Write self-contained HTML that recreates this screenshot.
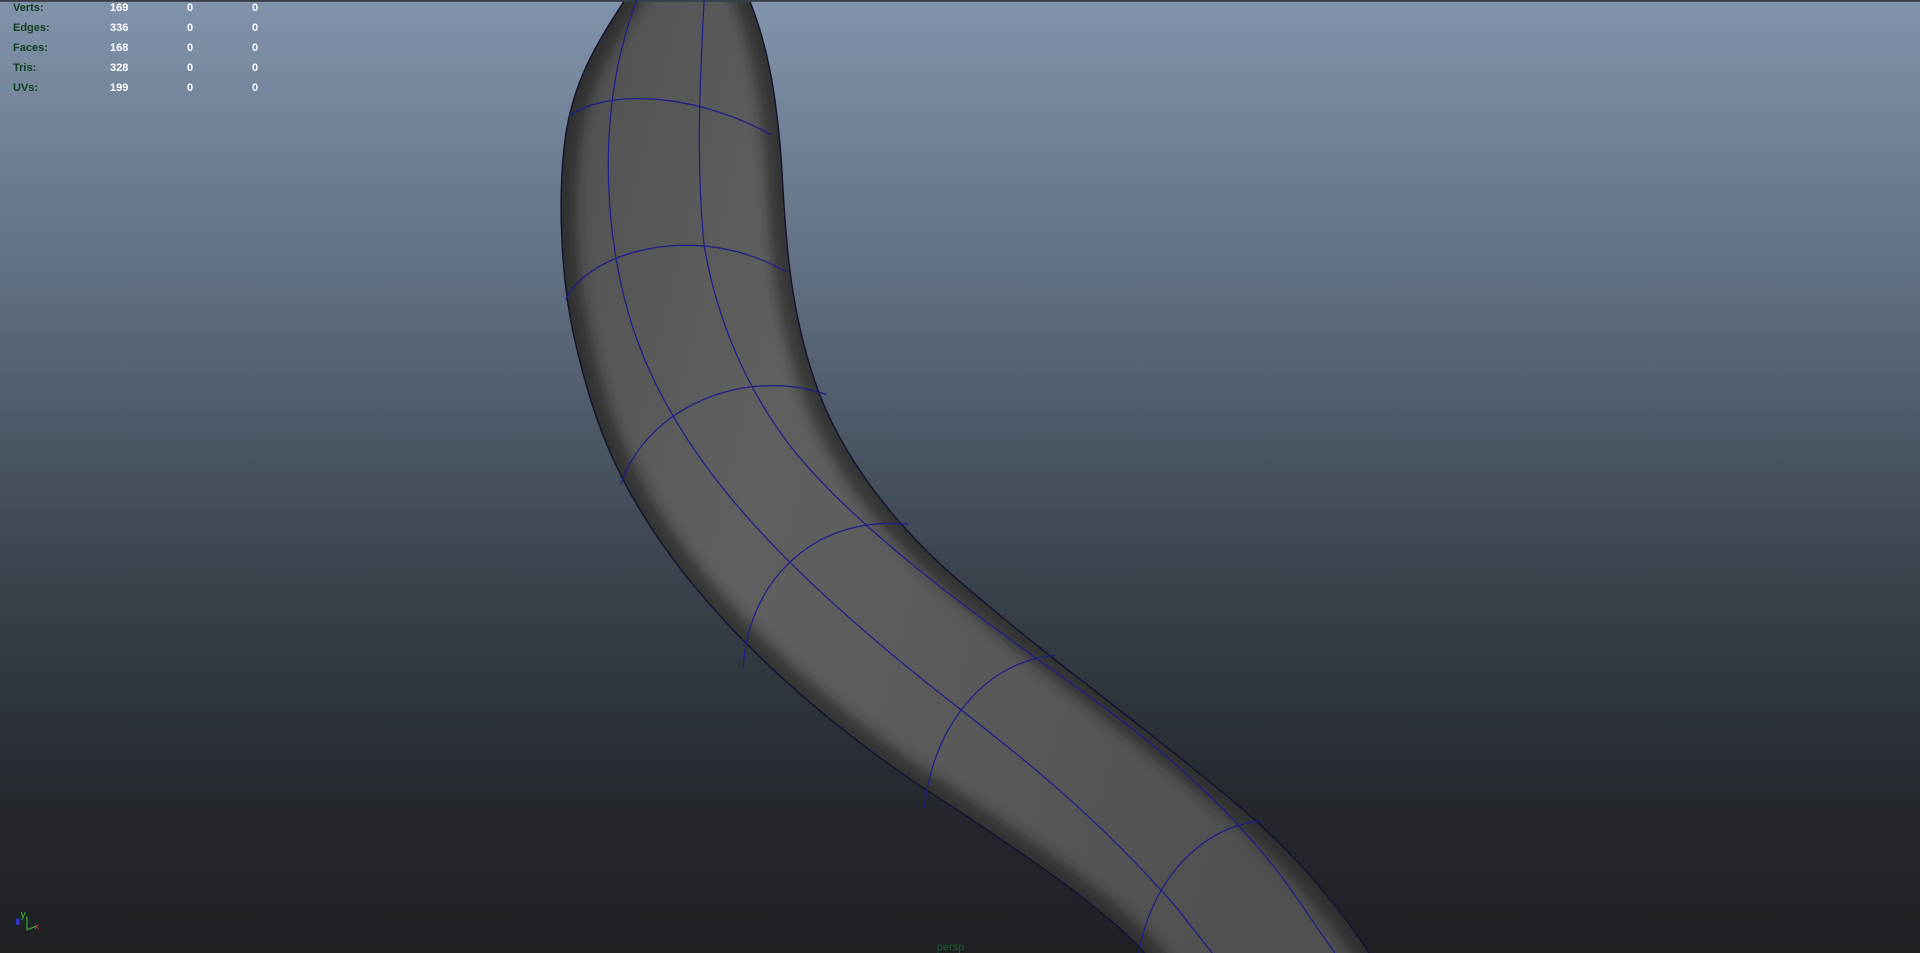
<!DOCTYPE html>
<html><head><meta charset="utf-8"><style>
html,body{margin:0;padding:0;width:1920px;height:953px;overflow:hidden;background:#1f2226}
svg{position:absolute;left:0;top:0}
.st{position:absolute;font-family:"Liberation Sans",sans-serif;font-weight:bold;font-size:11px;line-height:20px}
.l{left:13px;color:#0f3d22}
.n{color:#fff}
</style></head><body>
<svg width="1920" height="953" viewBox="0 0 1568 778" preserveAspectRatio="none">
<defs>
<linearGradient id="bg" x1="0" y1="0" x2="0" y2="1">
<stop offset="0" stop-color="#8193ab"/>
<stop offset="0.3" stop-color="#5f6e80"/>
<stop offset="0.6" stop-color="#3b434d"/>
<stop offset="0.85" stop-color="#24282d"/>
<stop offset="1" stop-color="#1e2024"/>
</linearGradient>
<linearGradient id="tb" x1="0" y1="0" x2="1" y2="0.3">
<stop offset="0" stop-color="#505050"/>
<stop offset="0.35" stop-color="#606060"/>
<stop offset="0.7" stop-color="#585858"/>
<stop offset="1" stop-color="#505050"/>
</linearGradient>
<path id="tube" d="M527,-25 C490,30 470,60 462,110 C455,160 458,230 470,280 C485,345 505,400 560,470 C620,545 700,610 780,660 C840,700 900,740 935,778 L955,805 L1135,805 L1118,778 C1080,720 1040,680 990,640 C930,590 860,540 790,480 C730,430 685,370 665,310 C645,250 642,200 638,130 C634,80 628,40 612,0 L605,-25 Z"/>
<clipPath id="cp"><use href="#tube"/></clipPath>
<filter id="bl"><feGaussianBlur stdDeviation="5"/></filter>
</defs>
<rect width="1568" height="778" fill="url(#bg)"/>
<use href="#tube" fill="url(#tb)"/>
<g clip-path="url(#cp)">
<use href="#tube" fill="none" stroke="#1a1a1a" stroke-width="26" opacity="0.6" filter="url(#bl)"/>
</g>
<use href="#tube" fill="none" stroke="#14142e" stroke-width="1.2"/>
<rect width="1568" height="1.5" fill="#3a3f47"/>
<g fill="none" stroke="#1d1d8c" stroke-width="1">
<path d="M520,0 C505,40 495,90 497,150 C500,230 520,290 550,340 C590,410 660,480 760,560 C830,615 890,660 960,740 L990,778"/>
<path d="M575,0 C572,60 568,130 575,200 C585,260 610,320 650,370 C700,430 780,490 850,540 C920,590 990,640 1050,720 L1090,778"/>
<path d="M465,95 C490,75 560,72 630,110"/>
<path d="M462,245 C480,205 570,180 642,222"/>
<path d="M507,395 C530,330 610,300 675,322"/>
<path d="M607,545 C610,480 660,420 742,428"/>
<path d="M755,660 C760,600 800,540 862,535"/>
<path d="M930,778 C940,720 980,675 1030,670"/>
</g>
<path d="M22,759 L22,748 M22,759 L30,756" stroke="#3a3" stroke-width="1"/>
<text x="17" y="749" fill="#3c3" font-family="Liberation Sans" font-size="8">y</text>
<text x="28" y="759" fill="#c33" font-family="Liberation Sans" font-size="8">x</text>
<rect x="13" y="750" width="3" height="5" fill="#33c"/>
<text x="765" y="776" fill="#1e5a2e" font-family="Liberation Sans" font-size="9">persp</text>
</svg>
<div class="st l" style="top:-2px">Verts:<br>Edges:<br>Faces:<br>Tris:<br>UVs:</div>
<div class="st n" style="top:-2px;left:110px">169<br>336<br>168<br>328<br>199</div>
<div class="st n" style="top:-2px;left:187px">0<br>0<br>0<br>0<br>0</div>
<div class="st n" style="top:-2px;left:252px">0<br>0<br>0<br>0<br>0</div>
</body></html>
